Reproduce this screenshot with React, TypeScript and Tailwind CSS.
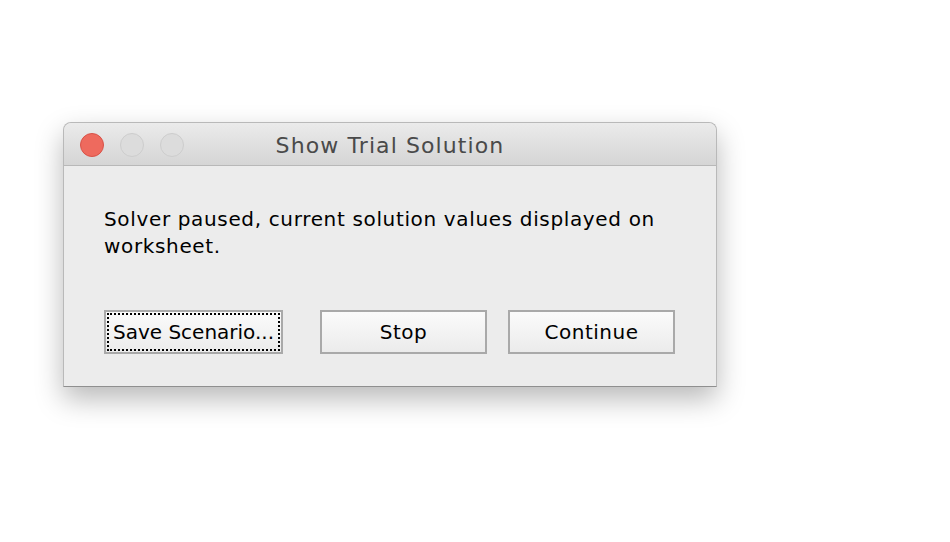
export default function App() {
  return (
    <div className="w-[950px] h-[542px] bg-white overflow-hidden" style={{ fontFamily: '"DejaVu Sans", sans-serif' }}>
      <div className="ml-[63px] mt-[122px] w-[654px] h-[265px] flex flex-col rounded-t-[8px] border border-[#b9b9b9] border-b-[#8f8f8f] bg-[#ececec] shadow-[0_12px_28px_rgba(0,0,0,0.28)]">
        <div className="relative h-[43px] shrink-0 flex items-center justify-center rounded-t-[8px] border-b border-[#b8b8b8] bg-gradient-to-b from-[#ebebeb] to-[#d5d5d5]">
          <div className="absolute left-[16px] top-[10px] flex gap-[16px]">
            <span className="w-[24px] h-[24px] rounded-full bg-[#ee6a5e] border border-[#d85248]" />
            <span className="w-[24px] h-[24px] rounded-full bg-[#dcdcdc] border border-[#cdcdcd]" />
            <span className="w-[24px] h-[24px] rounded-full bg-[#dcdcdc] border border-[#cdcdcd]" />
          </div>
          <span className="text-[22px] tracking-[1.1px] text-[#4a4a4a] mt-[2px]">Show Trial Solution</span>
        </div>
        <div className="flex flex-col pl-[40px] pt-[40px]">
          <p className="text-[20px] tracking-[0.65px] leading-[27px] text-black w-[580px]">
            Solver paused, current solution values displayed on worksheet.
          </p>
          <div className="flex mt-[50px]">
            <button className="w-[179px] h-[44px] border-2 border-[#a9a9a9] bg-gradient-to-b from-[#fbfbfb] to-[#ebebeb] p-[1px]">
              <span className="flex h-full w-full items-center justify-center whitespace-nowrap border-2 border-dotted border-black text-[20px] text-black">
                Save Scenario...
              </span>
            </button>
            <button className="ml-[37px] w-[167px] h-[44px] border-2 border-[#a9a9a9] bg-gradient-to-b from-[#fbfbfb] to-[#ebebeb] text-[20px] tracking-[0.5px] text-black">
              Stop
            </button>
            <button className="ml-[21px] w-[167px] h-[44px] border-2 border-[#a9a9a9] bg-gradient-to-b from-[#fbfbfb] to-[#ebebeb] text-[20px] tracking-[0.5px] text-black">
              Continue
            </button>
          </div>
        </div>
      </div>
    </div>
  );
}
